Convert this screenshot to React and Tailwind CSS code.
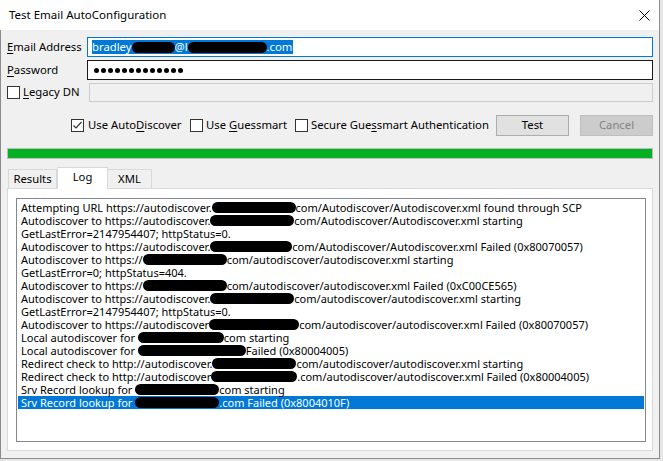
import React from "react";

const FONT = { fontFamily: '"Noto Sans", "Liberation Sans", sans-serif' };

const Redact = ({ w }) => (
  <span
    className="inline-block h-[11px] bg-black rounded-full shrink-0"
    style={{ width: w }}
  />
);

const U = ({ children }) => <span className="underline underline-offset-2">{children}</span>;

const Checkbox = ({ checked }) => (
  <span className="w-[13px] h-[13px] border border-[#333333] bg-white flex items-center justify-center shrink-0">
    {checked && (
      <svg width="11" height="11" viewBox="0 0 11 11">
        <polyline points="1.5,5.5 4,8 9.5,2" fill="none" stroke="#333333" strokeWidth="1.2" />
      </svg>
    )}
  </span>
);

const logLines = [
  ["Attempting URL https://autodiscover.", 84, "com/Autodiscover/Autodiscover.xml found through SCP"],
  ["Autodiscover to https://autodiscover.", 84, "com/Autodiscover/Autodiscover.xml starting"],
  ["GetLastError=2147954407; httpStatus=0."],
  ["Autodiscover to https://autodiscover.", 82, "com/Autodiscover/Autodiscover.xml Failed (0x80070057)"],
  ["Autodiscover to https://", 84, "com/autodiscover/autodiscover.xml starting"],
  ["GetLastError=0; httpStatus=404."],
  ["Autodiscover to https://", 84, "com/autodiscover/autodiscover.xml Failed (0xC00CE565)"],
  ["Autodiscover to https://autodiscover.", 84, "com/autodiscover/autodiscover.xml starting"],
  ["GetLastError=2147954407; httpStatus=0."],
  ["Autodiscover to https://autodiscover", 90, "com/autodiscover/autodiscover.xml Failed (0x80070057)"],
  ["Local autodiscover for ", 86, "com starting"],
  ["Local autodiscover for ", 108, "Failed (0x80004005)"],
  ["Redirect check to http://autodiscover.", 84, "com/autodiscover/autodiscover.xml starting"],
  ["Redirect check to http://autodiscover", 86, ".com/autodiscover/autodiscover.xml Failed (0x80004005)"],
  ["Srv Record lookup for ", 84, "com starting"],
  ["Srv Record lookup for ", 84, ".com Failed (0x8004010F)"],
];

export default function App() {
  return (
    <div className="w-[663px] h-[461px] bg-[#e6e6e6] overflow-hidden text-[11.3px] text-black" style={FONT}>
      <div className="w-[660px] h-[459px] flex flex-col border-r border-b border-[#8c8c8c]">
        {/* title bar */}
        <div className="h-[30px] bg-white flex items-center justify-between pl-[9px] pr-[9px] shrink-0">
          <span className="leading-none text-[11.5px]">Test Email AutoConfiguration</span>
          <svg width="11" height="11" viewBox="0 0 11 11">
            <path d="M0.5 0.5 L10.5 10.5 M10.5 0.5 L0.5 10.5" stroke="#000" strokeWidth="1" />
          </svg>
        </div>

        {/* body */}
        <div className="flex-1 bg-[#f0f0f0] border-l border-[#8c8c8c] flex flex-col">
          {/* Email */}
          <div className="flex items-center pl-[6px] pr-[6px] mt-[7px] h-[20px]">
            <span className="w-[80px] whitespace-nowrap"><U>E</U>mail Address</span>
            <div className="flex-1 h-[20px] border border-[#0078d7] bg-white flex items-center pl-[4px]">
              <span className="bg-[#0078d7] text-white h-[14px] flex items-center pr-[1px] leading-none whitespace-nowrap">
                bradley<Redact w={43} />@l<Redact w={79} />.com
              </span>
            </div>
          </div>

          {/* Password */}
          <div className="flex items-center pl-[6px] pr-[6px] mt-[3px] h-[20px]">
            <span className="w-[80px]"><U>P</U>assword</span>
            <div className="flex-1 h-[20px] border border-[#1a1a1a] bg-white flex items-center pl-[6px] gap-[2px]">
              {Array.from({ length: 13 }).map((_, i) => (
                <span key={i} className="w-[5px] h-[5px] rounded-full bg-black" />
              ))}
            </div>
          </div>

          {/* Legacy DN */}
          <div className="flex items-center pl-[6px] pr-[6px] mt-[3px] h-[19px]">
            <Checkbox />
            <span className="ml-[3px] w-[66px] whitespace-nowrap"><U>L</U>egacy DN</span>
            <div className="flex-1 h-[19px] border border-[#cccccc] bg-[#f0f0f0]" />
          </div>

          {/* options + buttons */}
          <div className="flex items-center mt-[13px] h-[21px] pl-[70px] pr-[6px] whitespace-nowrap">
            <div className="w-[119px] flex items-center gap-[4px]">
              <Checkbox checked />
              <span>Use Auto<U>D</U>iscover</span>
            </div>
            <div className="w-[105px] flex items-center gap-[3px]">
              <Checkbox />
              <span>Use <U>G</U>uessmart</span>
            </div>
            <div className="flex-1 flex items-center gap-[3px]">
              <Checkbox />
              <span>Secure Gue<U>s</U>smart Authentication</span>
            </div>
            <button className="w-[73px] h-[21px] bg-[#e1e1e1] border border-[#adadad] flex items-center justify-center">
              Test
            </button>
            <button className="ml-[11px] w-[73px] h-[21px] bg-[#cccccc] border border-[#bfbfbf] text-[#838383] flex items-center justify-center">
              Cancel
            </button>
          </div>

          {/* progress */}
          <div className="mx-[6px] mt-[12px] h-[11px] border border-[#bcbcbc] bg-[#06b025]" />

          {/* tabs */}
          <div className="flex items-end ml-[7px] mt-[8px] h-[21px] relative z-10">
            <div className="w-[49px] h-[19px] border border-b-0 border-[#d9d9d9] bg-[#f0f0f0] flex items-center justify-center">
              Results
            </div>
            <div className="w-[51px] h-[22px] -mb-[1px] border border-b-0 border-[#d9d9d9] bg-white flex items-start pt-[1px] justify-center">
              Log
            </div>
            <div className="w-[44px] h-[19px] border border-b-0 border-l-0 border-[#d9d9d9] bg-[#f0f0f0] flex items-center justify-center">
              XML
            </div>
          </div>

          {/* panel */}
          <div className="ml-[6px] w-[646px] h-[263px] border border-[#d9d9d9] bg-white pl-[8px] pr-[6px] pt-[9px] pb-[8px]">
            <div className="h-full border border-[#828790] bg-white p-[1px] pt-[1.5px] text-[11px]">
              {logLines.map((l, i) => {
                const sel = i === logLines.length - 1;
                return (
                  <div
                    key={i}
                    className={`h-[13px] leading-[13px] pl-[3px] whitespace-nowrap flex items-center ${
                      sel ? "bg-[#0078d7] text-white" : ""
                    }`}
                  >
                    <span className="whitespace-pre">{l[0]}</span>
                    {l[1] && <Redact w={l[1]} />}
                    {l[2] && <span>{l[2]}</span>}
                  </div>
                );
              })}
            </div>
          </div>
        </div>
      </div>
    </div>
  );
}
